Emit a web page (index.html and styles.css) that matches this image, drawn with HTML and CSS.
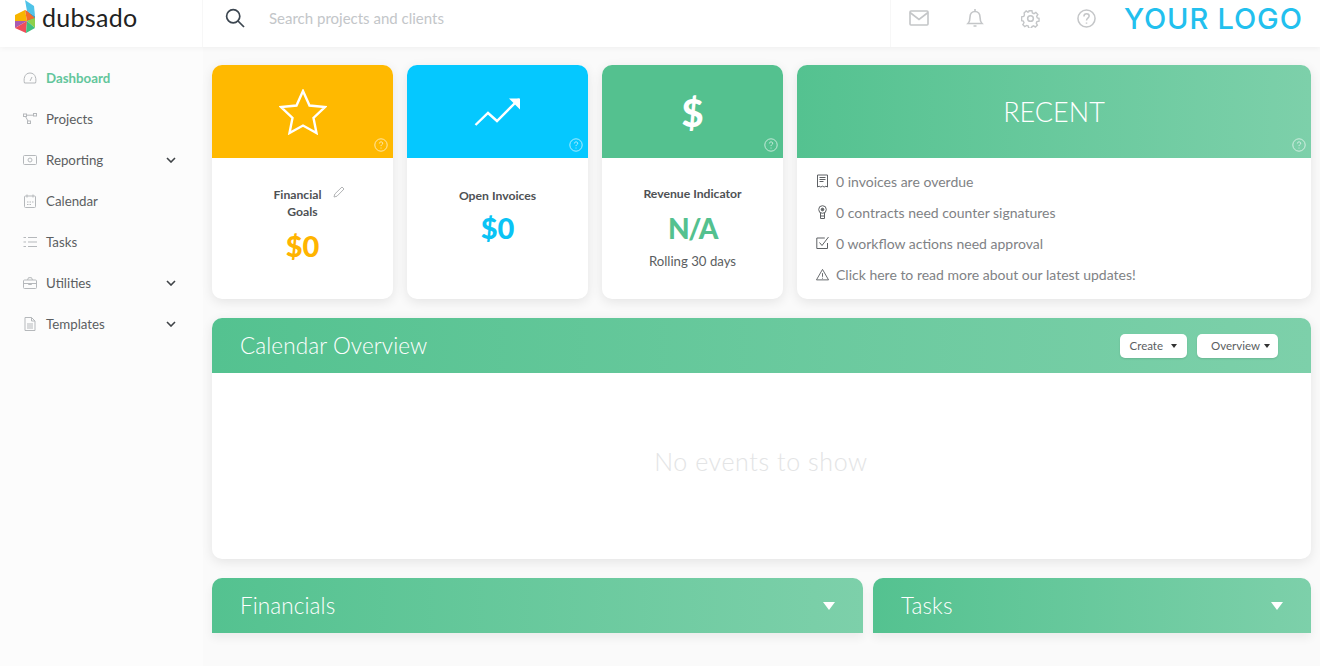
FILE: index.html
```html
<!DOCTYPE html>
<html lang="en">
<head>
<meta charset="utf-8">
<title>Dubsado Dashboard</title>
<link rel="stylesheet" href="styles.css">
</head>
<body>
<header class="topbar">
  <div class="brand">
    <svg class="brand-mark" viewBox="0 0 24 36" width="24" height="36">
      <polygon points="11,0 20,6 21,16 13,11" fill="#4fc3e8"/>
      <polygon points="13,11 21,16 21,19 13,21" fill="#2fa6d6"/>
      <polygon points="1,15 11,10 13,21 1,21" fill="#f7b500"/>
      <polygon points="11,10 13,11 21,18 13,21" fill="#f26b2a"/>
      <polygon points="1,21 13,21 1,28" fill="#a95bb0"/>
      <polygon points="13,21 21,18 21,28" fill="#8ed04b"/>
      <polygon points="1,28 13,21 12,33" fill="#ef4d5a"/>
      <polygon points="13,21 21,28 12,33" fill="#3fbf7f"/>
    </svg>
    <span class="brand-name">dubsado</span>
  </div>
  <div class="search">
    <svg class="search-icon" viewBox="0 0 20 20" width="20" height="20"><circle cx="8.2" cy="8.2" r="6.6"/><line x1="13" y1="13" x2="19" y2="19"/></svg>
    <span class="search-text">Search projects and clients</span>
  </div>
  <div class="top-actions">
    <svg class="top-icon" viewBox="0 0 20 16" width="20" height="16"><rect x="1" y="1" width="18" height="14" rx="1"/><path d="M1 2.5 10 9.5 19 2.5"/></svg>
    <svg class="top-icon" viewBox="0 0 18 20" width="18" height="20"><path d="M2 15.5c1.5-1.5 2-3 2-6.5 0-3 2-5.5 5-5.500s5 2.500 5 5.500c0 3.500.5 5 2 6.500z"/><path d="M9 1v2.500M7.500 18h3"/></svg>
    <svg class="top-icon" viewBox="0 0 20 20" width="19" height="19"><path d="M8.300 1h3.400l.5 2.500 1.900.8 2.200-1.400 2.300 2.400-1.400 2.100.8 1.900 2 .5v3.300l-2.500.5-.8 1.900 1.400 2.200-2.400 2.300-2.100-1.400-1.900.8-.5 2h-3.300l-.5-2.500-1.900-.8-2.200 1.400-2.300-2.400 1.400-2.100-.8-1.900-2-.5V8.100l2.500-.5.8-1.900L2.500 3.500l2.400-2.300L7 2.600l1-.4z" transform="translate(1 1) scale(.9)"/><circle cx="10" cy="10" r="3"/></svg>
    <svg class="top-icon" viewBox="0 0 20 20" width="19" height="19"><circle cx="10" cy="10" r="9"/><path d="M7.300 7.800c0-1.700 1.200-2.800 2.800-2.800s2.700 1 2.700 2.400c0 2.200-2.800 2.300-2.800 4.600"/><path d="M10 14.200v1.300"/></svg>
    <span class="your-logo">YOUR LOGO</span>
  </div>
</header>

<div class="shell">
  <nav class="sidebar">
    <a class="nav-item active">
      <svg class="nav-icon" viewBox="0 0 14 12" width="14" height="12"><path d="M1.500 11h11c1-3 .5-10-5.500-10S.5 8 1.500 11z"/><path d="M7 9 9 5"/></svg>
      <span class="nav-label">Dashboard</span>
    </a>
    <a class="nav-item">
      <svg class="nav-icon" viewBox="0 0 14 12" width="14" height="12"><rect x=".5" y="1" width="3" height="2.500"/><rect x="10.500" y=".5" width="3" height="2.500"/><rect x="4.500" y="8" width="3" height="2.500"/><path d="M3.500 2.200h7M2.500 3.500l2.500 4.500"/></svg>
      <span class="nav-label">Projects</span>
    </a>
    <a class="nav-item">
      <svg class="nav-icon" viewBox="0 0 14 10" width="14" height="10"><rect x=".5" y=".5" width="13" height="9" rx="1"/><circle cx="7" cy="5" r="2"/></svg>
      <span class="nav-label">Reporting</span>
      <svg class="chev" viewBox="0 0 10 6" width="10" height="6"><path d="M1 1 5 5 9 1"/></svg>
    </a>
    <a class="nav-item">
      <svg class="nav-icon" viewBox="0 0 12 14" width="12" height="14"><rect x=".5" y="2" width="11" height="11.500" rx="1"/><path d="M3 .5v3M9 .5v3M3 8h1.500M5.500 8H7M8 8h1.500M3 10.500h1.500M5.500 10.500H7"/></svg>
      <span class="nav-label">Calendar</span>
    </a>
    <a class="nav-item">
      <svg class="nav-icon" viewBox="0 0 14 12" width="14" height="12"><path d="M5 1.500h9M5 6h9M5 10.500h9M.5 1.500h2.500M.5 6h2.500M.5 10.500h2.500"/></svg>
      <span class="nav-label">Tasks</span>
    </a>
    <a class="nav-item">
      <svg class="nav-icon" viewBox="0 0 14 12" width="14" height="12"><rect x=".5" y="3" width="13" height="8.500" rx="1"/><path d="M4.500 3 5.500.7h3L9.500 3M.5 6.500h13M5.500 6v1.500h3V6"/></svg>
      <span class="nav-label">Utilities</span>
      <svg class="chev" viewBox="0 0 10 6" width="10" height="6"><path d="M1 1 5 5 9 1"/></svg>
    </a>
    <a class="nav-item">
      <svg class="nav-icon" viewBox="0 0 11 14" width="11" height="14"><path d="M.5.500h6.500l3.500 3.500v9.500H.5z"/><path d="M7 .5V4h3.500M2.500 7h6M2.500 9h6M2.500 11h6"/></svg>
      <span class="nav-label">Templates</span>
      <svg class="chev" viewBox="0 0 10 6" width="10" height="6"><path d="M1 1 5 5 9 1"/></svg>
    </a>
  </nav>

  <main class="content">
    <section class="stat-row">
      <article class="card stat">
        <div class="stat-head amber">
          <svg class="head-icon" viewBox="0 0 48 46" width="48" height="46"><polygon points="24,2 30.500,16.500 46,18 34.500,29 37.500,44 24,36.500 10.500,44 13.500,29 2,18 17.500,16.500"/></svg>
          <svg class="help" viewBox="0 0 14 14" width="14" height="14"><circle cx="7" cy="7" r="6.200"/><path d="M5.400 5.500c0-1 .7-1.600 1.700-1.600s1.600.6 1.600 1.400c0 1.300-1.700 1.300-1.700 2.800M7 9.600v.9"/></svg>
        </div>
        <div class="stat-body goals">
          <div class="stat-title">Financial<span class="pencil-slot"><svg class="pencil" viewBox="0 0 12 12" width="12" height="12"><path d="M1 11l.8-3L9 1l2 2-7 7.200z"/></svg></span><br>Goals</div>
          <div class="stat-value amber-text">$0</div>
        </div>
      </article>
      <article class="card stat">
        <div class="stat-head sky">
          <svg class="head-icon" viewBox="0 0 48 32" width="48" height="32"><path d="M1.500 29 14 17l9 8L45 3"/><path d="M35 2.500h11v11" class="filled"/></svg>
          <svg class="help" viewBox="0 0 14 14" width="14" height="14"><circle cx="7" cy="7" r="6.200"/><path d="M5.400 5.500c0-1 .7-1.600 1.700-1.600s1.600.6 1.600 1.400c0 1.300-1.700 1.300-1.700 2.800M7 9.600v.9"/></svg>
        </div>
        <div class="stat-body invoices">
          <div class="stat-title">Open Invoices</div>
          <div class="stat-value sky-text">$0</div>
        </div>
      </article>
      <article class="card stat">
        <div class="stat-head green">
          <span class="dollar">$</span>
          <svg class="help" viewBox="0 0 14 14" width="14" height="14"><circle cx="7" cy="7" r="6.200"/><path d="M5.400 5.500c0-1 .7-1.600 1.700-1.600s1.600.6 1.600 1.400c0 1.300-1.700 1.300-1.700 2.800M7 9.600v.9"/></svg>
        </div>
        <div class="stat-body revenue">
          <div class="stat-title">Revenue Indicator</div>
          <div class="stat-value green-text na">N/A</div>
          <div class="stat-note">Rolling 30 days</div>
        </div>
      </article>
      <article class="card recent">
        <div class="stat-head gradient">
          <span class="recent-title">RECENT</span>
          <svg class="help" viewBox="0 0 14 14" width="14" height="14"><circle cx="7" cy="7" r="6.200"/><path d="M5.400 5.500c0-1 .7-1.600 1.700-1.600s1.600.6 1.600 1.400c0 1.300-1.700 1.300-1.700 2.800M7 9.600v.9"/></svg>
        </div>
        <ul class="recent-list">
          <li class="recent-item">
            <svg class="recent-icon" viewBox="0 0 13 14" width="13" height="14"><path d="M1.500 13V1h10v12l-1.600-.8-1.700.8-1.700-.8-1.700.8-1.700-.8z"/><path d="M3.500 3.500h6M3.500 5.500h6M3.500 7.500h4"/></svg>
            <span>0 invoices are overdue</span>
          </li>
          <li class="recent-item">
            <svg class="recent-icon" viewBox="0 0 13 14" width="13" height="14"><circle cx="6.500" cy="4.500" r="3.800"/><circle cx="6.500" cy="4.500" r="1.300" class="dot"/><path d="M4.500 8v5.500h4V8M4.500 11h4"/></svg>
            <span>0 contracts need counter signatures</span>
          </li>
          <li class="recent-item">
            <svg class="recent-icon" viewBox="0 0 13 14" width="13" height="14"><path d="M11.500 7v5.500H.8V2h8"/><path d="M3.500 6.500 6 9.500 12.500 1"/></svg>
            <span>0 workflow actions need approval</span>
          </li>
          <li class="recent-item">
            <svg class="recent-icon" viewBox="0 0 14 13" width="14" height="13"><path d="M7 1 13.500 12.300H.5z"/><path d="M7 5v4M7 10v1"/></svg>
            <span>Click here to read more about our latest updates!</span>
          </li>
        </ul>
      </article>
    </section>

    <section class="card calendar">
      <div class="panel-head gradient">
        <h2 class="panel-title">Calendar Overview</h2>
        <div class="panel-actions">
          <button class="pill">Create <i class="caret"></i></button>
          <button class="pill wide">Overview <i class="caret"></i></button>
        </div>
      </div>
      <div class="calendar-body">No events to show</div>
    </section>

    <section class="bottom-row">
      <div class="panel-head gradient collapsed">
        <h2 class="panel-title">Financials</h2>
        <i class="big-caret"></i>
      </div>
      <div class="panel-head gradient collapsed">
        <h2 class="panel-title">Tasks</h2>
        <i class="big-caret"></i>
      </div>
    </section>
  </main>
</div>
</body>
</html>
```

FILE: styles.css
```css
* { box-sizing: border-box; }
html, body { margin: 0; height: 666px; overflow: hidden; }
body { background: #fafafa; font-family: "Lato", "Liberation Sans", sans-serif; color: #55585b; display: flex; flex-direction: column; }
svg { display: block; flex: none; }

.topbar { height: 47px; flex: none; background: #fff; display: flex; align-items: center; box-shadow: 0 1px 6px rgba(0,0,0,.05); position: relative; }
.brand { width: 203px; height: 100%; display: flex; align-items: center; padding: 0 0 9px 14px; border-right: 1px solid #f7f7f7; overflow: hidden; }
.brand-mark { margin-right: 4px; margin-top: -2px; }
.brand-name { font-size: 25px; color: #222; letter-spacing: .3px; margin-top: -5px; }
.search { flex: 1; display: flex; align-items: center; padding: 0 0 9px 22px; height: 100%; }
.search-icon { fill: none; stroke: #3c4650; stroke-width: 1.7; margin-top: -2px; }
.search-text { margin-left: 24px; font-size: 15px; color: #c3c6c9; margin-top: -2px; }
.top-actions { width: 430px; height: 100%; display: flex; align-items: center; border-left: 1px solid #f7f7f7; padding: 0 0 9px 18px; }
.top-icon { fill: none; stroke: #c4c6c8; stroke-width: 1.6; margin-right: 37px; margin-top: -2px; }
.your-logo { margin-left: -9px; font-family: "Inter", sans-serif; font-size: 29px; font-weight: 500; letter-spacing: .85px; color: #22c0ee; margin-top: -2px; white-space: nowrap; }

.shell { flex: 1; display: flex; min-height: 0; }
.sidebar { width: 203px; flex: none; background: #fcfcfc; padding-top: 10px; display: flex; flex-direction: column; }
.nav-item { height: 41px; display: flex; align-items: center; padding: 0 27px 0 23px; font-size: 13.300px; color: #5b5e61; position: relative; }
.nav-item.active { color: #62c69b; font-weight: 700; }
.nav-icon { fill: none; stroke: #b5b8bb; stroke-width: 1; margin-right: 9px; width: 14px; }
.nav-label { flex: 1; }
.chev { fill: none; stroke: #3f4347; stroke-width: 1.6; }

.content { flex: 1; padding: 18px 9px 0; display: flex; flex-direction: column; gap: 19px; min-width: 0; }
.card { background: #fff; border-radius: 10px; box-shadow: 0 3px 12px rgba(0,0,0,.09); overflow: hidden; }
.stat-row { display: flex; gap: 14px; height: 234px; flex: none; }
.stat { width: 181px; flex: none; display: flex; flex-direction: column; }
.recent { flex: 1; display: flex; flex-direction: column; }
.stat-head { height: 93px; flex: none; display: flex; align-items: center; justify-content: center; position: relative; }
.amber { background: #ffb900; }
.sky { background: #05c8ff; }
.green { background: #54c18f; }
.gradient { background: linear-gradient(90deg, #54c290, #7dd0aa); }
.head-icon { fill: none; stroke: #fff; stroke-width: 2.400; }
.head-icon .filled { fill: #fff; stroke: none; }
.help { position: absolute; right: 5px; bottom: 6px; fill: none; stroke: rgba(255,255,255,.65); stroke-width: 1; }
.dollar { color: #fff; font-size: 38px; font-weight: 900; line-height: 1; }

.stat-body { flex: 1; display: flex; flex-direction: column; align-items: center; text-align: center; }
.stat-title { font-size: 12.200px; font-weight: 700; color: #4e5154; line-height: 17px; }
.stat-value { font-size: 29px; font-weight: 900; line-height: 34px; }
.pencil-slot { display: inline-block; width: 10px; height: 0; position: relative; }
.pencil { position: absolute; left: 11px; bottom: 1px; fill: none; stroke: #a9acae; stroke-width: .9; }
.goals { padding-top: 28px; }
.goals .stat-value { margin-top: 9px; }
.invoices { padding-top: 29px; }
.invoices .stat-value { margin-top: 7px; }
.revenue { padding-top: 27px; }
.revenue .stat-value { margin-top: 9px; }
.na { font-size: 28px; letter-spacing: -1.200px; }
.stat-note { font-size: 13.200px; margin-top: 7px; line-height: 18px; color: #5b5e61; }
.amber-text { color: #ffb400; }
.sky-text { color: #0ac3f5; }
.green-text { color: #54c18f; }

.recent-title { color: #fff; font-size: 27px; font-weight: 300; }
.recent-list { list-style: none; margin: 0; padding: 7.500px 0 0 19px; }
.recent-item { height: 31.200px; display: flex; align-items: center; font-size: 14px; color: #808285; }
.recent-icon { fill: none; stroke: #5e6164; stroke-width: 1; margin-right: 7px; width: 13px; }
.recent-icon .dot { fill: #5e6164; }

.calendar { height: 241px; flex: none; display: flex; flex-direction: column; }
.panel-head { height: 55px; flex: none; display: flex; align-items: center; justify-content: space-between; padding: 0 33px 0 28px; }
.panel-title { margin: 0; font-size: 22.500px; font-weight: 300; letter-spacing: .1px; color: #fff; }
.panel-actions { display: flex; gap: 10px; }
.pill { height: 24px; background: #fff; border: 0; border-radius: 5px; font: 11.500px "Lato", sans-serif; color: #5b5e61; padding: 0 10px; display: flex; align-items: center; box-shadow: 0 1px 2px rgba(0,0,0,.12); }
.pill.wide { padding: 0 8px 0 14px; }
.caret { width: 0; height: 0; margin-left: 8px; border: 3.500px solid transparent; border-top: 4px solid #333; border-bottom: 0; }
.wide .caret { margin-left: 4px; }
.calendar-body { flex: 1; display: flex; align-items: center; justify-content: center; font-size: 25px; font-weight: 300; color: #e3e4e5; padding: 0 1px 10px 0; letter-spacing: .6px; }

.bottom-row { display: grid; grid-template-columns: 651fr 438fr; gap: 10px; }
.collapsed { border-radius: 10px 10px 0 0; box-shadow: 0 5px 10px rgba(0,0,0,.06); }
.bottom-row .panel-head { padding: 0 28px; }
.big-caret { width: 0; height: 0; border: 6.500px solid transparent; border-top: 8px solid #fff; border-bottom: 0; }
```
